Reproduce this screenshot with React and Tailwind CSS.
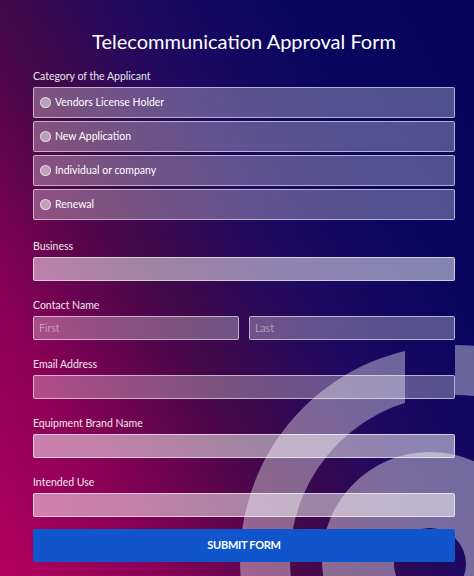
import { useState } from 'react';

const categories = [
  'Vendors License Holder',
  'New Application',
  'Individual or company',
  'Renewal',
];

const Backdrop = () => (
  <svg
    className="absolute inset-0 pointer-events-none"
    width="474"
    height="576"
    viewBox="0 0 474 576"
  >
    <defs>
      <mask id="slot">
        <rect x="0" y="0" width="474" height="576" fill="white" />
        <rect x="405" y="300" width="50" height="130" fill="black" />
      </mask>
    </defs>
    {/* outer ring with a notch at the top */}
    <path
      mask="url(#slot)"
      fillRule="evenodd"
      fill="white"
      fillOpacity="0.38"
      d="M240 560a215 215 0 1 0 430 0a215 215 0 1 0 -430 0Z M290 560a165 165 0 1 0 330 0a165 165 0 1 0 -330 0Z"
    />
    {/* inner ring */}
    <path
      fillRule="evenodd"
      fill="white"
      fillOpacity="0.4"
      d="M322 560a108 108 0 1 0 216 0a108 108 0 1 0 -216 0Z M394 564a36 36 0 1 0 72 0a36 36 0 1 0 -72 0Z"
    />
  </svg>
);

const Label = ({ children }) => (
  <div className="h-[14px] leading-[14px] text-[10.5px] text-white/90 mb-[4px]">{children}</div>
);

const Field = ({ light, placeholder }) => (
  <input
    placeholder={placeholder}
    className={`block h-[24px] w-full min-w-0 rounded-[2px] border px-[5px] text-[10.5px] text-white outline-none placeholder:text-white/45 ${
      light ? 'bg-white/50 border-white/60' : 'bg-white/30 border-white/55'
    }`}
  />
);

export default function App() {
  const [category, setCategory] = useState(null);

  return (
    <div
      className="relative w-full h-[576px] overflow-hidden bg-[linear-gradient(60deg,#b3005e_0%,#8a0056_20%,#440848_40%,#1e0962_58%,#0a0660_76%,#04045a_100%)]"
      style={{ fontFamily: 'Lato, "Noto Sans", sans-serif' }}
    >
      <Backdrop />

      <form
        className="relative flex flex-col pl-[33px] pr-[19px] pt-[27px]"
        onSubmit={e => e.preventDefault()}
      >
        <h1 className="h-[28px] leading-[28px] text-center text-[20px] font-normal text-white">
          Telecommunication Approval Form
        </h1>

        {/* Category */}
        <div className="mt-[14px]">
          <Label>Category of the Applicant</Label>
          <div className="flex flex-col gap-[3px]">
            {categories.map(item => (
              <label
                key={item}
                className="flex h-[31px] items-center gap-[4px] rounded-[2px] border border-white/55 bg-white/30 pl-[6px] text-[10.5px] text-white cursor-pointer"
              >
                <input
                  type="radio"
                  name="category"
                  checked={category === item}
                  onChange={() => setCategory(item)}
                  className="sr-only"
                />
                <span
                  className={`h-[11px] w-[11px] rounded-full border border-white/60 ${
                    category === item ? 'bg-white' : 'bg-white/45'
                  }`}
                />
                <span>{item}</span>
              </label>
            ))}
          </div>
        </div>

        <div className="mt-[19px]">
          <Label>Business</Label>
          <Field light />
        </div>

        <div className="mt-[17px]">
          <Label>Contact Name</Label>
          <div className="flex gap-[10px]">
            <Field placeholder="First" />
            <Field placeholder="Last" />
          </div>
        </div>

        <div className="mt-[17px]">
          <Label>Email Address</Label>
          <Field />
        </div>

        <div className="mt-[17px]">
          <Label>Equipment Brand Name</Label>
          <Field light />
        </div>

        <div className="mt-[17px]">
          <Label>Intended Use</Label>
          <Field light />
        </div>

        <button
          type="submit"
          className="mt-[12px] h-[33px] w-full rounded-[2px] bg-[#1155cc] text-[11px] font-bold tracking-[-0.3px] text-white"
        >
          SUBMIT FORM
        </button>
      </form>
    </div>
  );
}
